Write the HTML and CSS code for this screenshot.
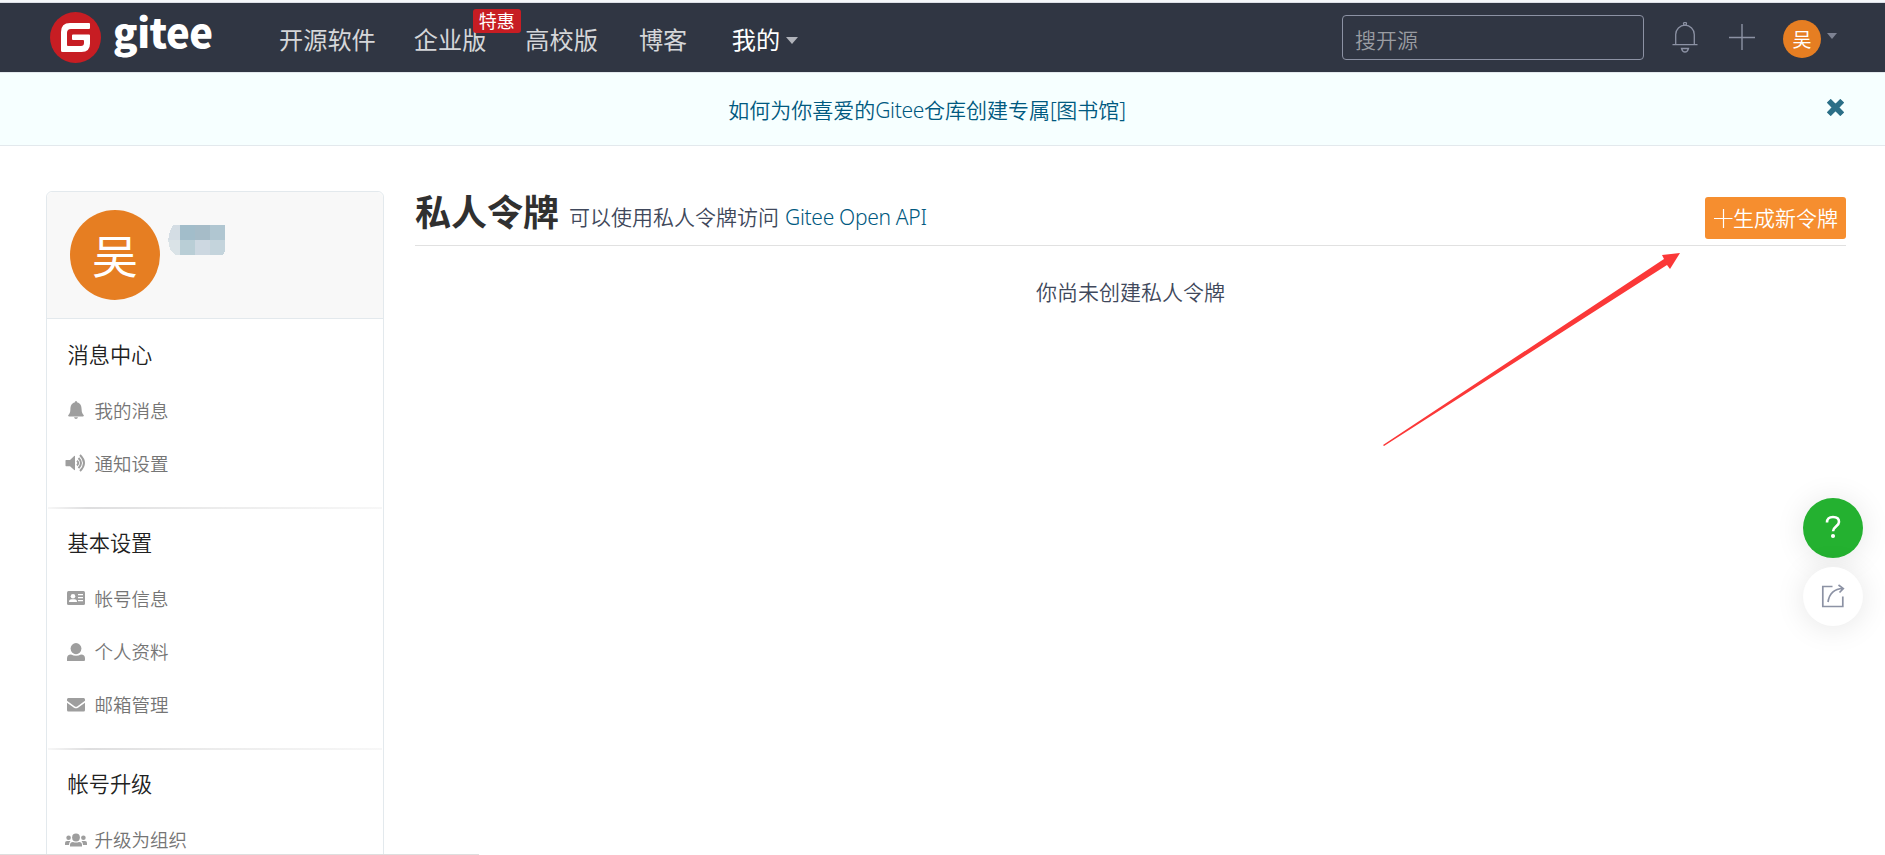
FILE: index.html
```html
<!DOCTYPE html>
<html lang="zh-CN">
<head>
  <meta charset="UTF-8" />
  <meta name="viewport" content="width=device-width, initial-scale=1" />
  <title>私人令牌 - Gitee</title>
  <link rel="stylesheet" href="styles.css">
</head>
<body>

  <header class="navbar">
    <a class="logo" href="#">
      <svg width="51" height="51" viewBox="0 0 51 51">
        <circle cx="25.5" cy="25.5" r="25.5" fill="#c71d23" />
        <path d="M39 11Q40 11 40 12V16Q40 17 39 17H21Q17 17 17 21V33Q17 34 18 34H31Q34 34 34 31V29Q34 28 33 28H23Q22 28 22 27V23.500Q22 22.500 23 22.500H39Q40 22.500 40 23.500V31.500Q40 40 31.500 40H12.500Q11 40 11 38.500V20Q11 11 20 11Z" fill="#fff" />
      </svg>
      <span class="logo-text">gitee</span>
    </a>
    <nav class="menu">
      <a class="menu-oss" href="#">开源软件</a>
      <a class="menu-ent" href="#">企业版<span class="badge">特惠</span></a>
      <a class="menu-edu" href="#">高校版</a>
      <a class="menu-blog" href="#">博客</a>
      <a class="menu-my" href="#">我的<i class="caret"></i></a>
    </nav>
    <div class="nav-right">
      <input class="search" type="text" placeholder="搜开源" />
      <svg class="bell" width="26" height="31" viewBox="0 0 26 31" fill="none" stroke="#8c92a4" stroke-width="1.300">
        <path d="M0.500 22.700H25.500M3.700 22.500V12.500a9.300 9.300 0 0 1 18.600 0V22.500M9.500 26.500H16.500Q15.500 30 13 30T9.500 26.500Z" />
        <circle cx="13" cy="1.800" r="1.500" />
      </svg>
      <svg class="plus" width="26" height="26" viewBox="0 0 26 26" stroke="#8c92a4" stroke-width="1.400">
        <path d="M0 13.500H26M13 0V26" />
      </svg>
      <span class="avatar-small">吴</span>
      <i class="caret caret-user"></i>
    </div>
  </header>

  <div class="notice">
    <a href="#">如何为你喜爱的<span class="latin">Gitee</span>仓库创建专属<span class="latin">[</span>图书馆<span class="latin">]</span></a>
    <svg class="close" width="17" height="17" viewBox="0 0 16 16">
      <path d="M3.500.5L8 5L12.500.5L15.500 3.500L11 8L15.500 12.500L12.500 15.500L8 11L3.500 15.500L.5 12.500L5 8L.5 3.500Z" fill="#2b6f87" stroke="#2b6f87" stroke-linejoin="round" />
    </svg>
  </div>

  <div class="container">
    <aside class="sidebar">
      <div class="user">
        <span class="avatar">吴</span>
        <svg class="user-name" width="57" height="30" viewBox="0 0 57 30" shape-rendering="crispEdges">
          <path d="M12 0H5L2 6L0 15H12Z" fill="#d4dde4" />
          <path d="M12 15H0L2 24L7 30H12Z" fill="#dae3e7" />
          <path d="M12 0H27V15H12Z" fill="#a2bdca" />
          <path d="M27 0H42V15H27Z" fill="#a6bcc8" />
          <path d="M42 0H57V15H42Z" fill="#b0c6d1" />
          <path d="M12 15H27V30H12Z" fill="#b9ced6" />
          <path d="M27 15H42V30H27Z" fill="#cdd8e1" />
          <path d="M42 15H57V26L55 30H42Z" fill="#c4d4dc" />
        </svg>
      </div>
      <section class="group">
        <h3>消息中心</h3>
        <a class="item" href="#">
          <svg class="icon" width="22" height="18" viewBox="0 0 22 18">
            <path d="M11 0q1.200 0 1.300 1.500C15.500 2.200 16.600 5 16.600 8.200c0 3.500 1.200 4.700 2 5.800.5.700.2 1.500-.7 1.500H4.100c-.9 0-1.200-.8-.7-1.500.8-1.100 2-2.300 2-5.800C5.400 5 6.500 2.200 9.700 1.500Q9.800 0 11 0ZM9 16.200h4Q12.500 18 11 18T9 16.200Z" />
          </svg><span>我的消息</span></a>
        <a class="item" href="#">
          <svg class="icon" width="22" height="18" viewBox="0 0 22 18">
            <path d="M1 6H5L9.200 2Q10 1.400 10 2.500V15.500Q10 16.500 9.200 16L5 12.200H1Q.5 12.200.5 11.500V6.500Q.5 6 1 6Z" />
            <path d="M12 6.700Q14.500 9 12 11.500M13.500 4Q18.500 9 13.500 14.200M15 1Q23 9 15 17" fill="none" stroke="#9e9e9e" stroke-width="1.900" />
          </svg><span>通知设置</span></a>
      </section>
      <section class="group">
        <h3>基本设置</h3>
        <a class="item" href="#">
          <svg class="icon" width="22" height="18" viewBox="0 0 22 18">
            <rect x="2" y="2" width="18" height="14" rx="1.500" />
            <g fill="#fff">
              <circle cx="8" cy="7.300" r="2.300" />
              <path d="M4 13Q4 10.200 6.500 10.200H9.500Q12 10.200 12 13ZM13 5h5v1.200h-5ZM13 8h5v1.200h-5ZM13 11h5v1.200h-5Z" />
            </g>
          </svg><span>帐号信息</span></a>
        <a class="item" href="#">
          <svg class="icon" width="22" height="18" viewBox="0 0 22 18">
            <ellipse cx="11" cy="5.600" rx="5.400" ry="5.600" />
            <path d="M2 18V15.500Q2 11.700 6 11.600Q11 14 16 11.600Q20 11.700 20 15.500V17Q20 18 19 18Z" />
          </svg><span>个人资料</span></a>
        <a class="item" href="#">
          <svg class="icon" width="22" height="18" viewBox="0 0 22 18">
            <path d="M3.300 2H18.700Q20 2 20 3.500V4.700L12.500 10.200Q11 11.200 9.500 10.200L2 4.700V3.500Q2 2 3.300 2ZM2 6.700L9 11.700Q11 13 13 11.700L20 6.700V14Q20 15.500 18.700 15.500H3.300Q2 15.500 2 14Z" />
          </svg><span>邮箱管理</span></a>
      </section>
      <section class="group">
        <h3>帐号升级</h3>
        <a class="item" href="#">
          <svg class="icon" width="22" height="18" viewBox="0 0 22 18">
            <circle cx="11" cy="6.500" r="3.900" />
            <circle cx="3.600" cy="6.700" r="2.300" />
            <circle cx="18.400" cy="6.700" r="2.300" />
            <path d="M5 15.500V14Q5 11 8 11Q11 12 14 11Q17 11 17 14V15.500ZM0 14V12Q0 10 2 10H5.500Q4 11.500 4 14ZM22 14V12Q22 10 20 10H16.500Q18 11.500 18 14Z" />
          </svg><span>升级为组织</span></a>
      </section>
    </aside>

    <main class="content">
      <div class="page-head">
        <h1>私人令牌</h1>
        <p class="desc">可以使用私人令牌访问<a class="latin" href="#">Gitee Open API</a></p>
        <button class="btn-new">
          <svg width="19" height="19" viewBox="0 0 19 19" stroke="#fff" stroke-width="1.200">
            <path d="M0 9.500H18.500M9.500 0V19" />
          </svg><span>生成新令牌</span>
        </button>
      </div>
      <p class="empty">你尚未创建私人令牌</p>
    </main>
  </div>

  <svg class="pointer" width="297" height="194" viewBox="0 0 297 194">
    <path d="M297 0L279 2L281 6L0 192L1 193L284 12L287 16Z" fill="#fb3838" />
  </svg>

  <div class="float-tools">
    <a class="tool help" href="#">
      <svg width="16" height="24" viewBox="0 0 16 24" fill="none" stroke="#fff" stroke-width="2.600">
        <path d="M2 7.500Q2 2 8 2T14 7Q14 9 11 11.500T8 16.200" />
        <circle cx="8" cy="21" r="1.300" fill="#fff" stroke-width="1.500" />
      </svg>
    </a>
    <a class="tool share" href="#">
      <svg width="24" height="24" viewBox="0 0 24 24" fill="none" stroke="#8c92a4" stroke-width="1.700">
        <path d="M11.500 2.500H1.800V22.500H21.800V12.500M7 18Q9 5 22 4.500M17.500 1L22.300 4.500L18.500 8.500" />
      </svg>
    </a>
  </div>

  <div class="status-line"></div>

</body>
</html>
```

FILE: styles.css
```css
* {
  box-sizing: border-box;
}
body {
  margin: 0;
  height: 855px;
  overflow: hidden;
  position: relative;
  background: #fff;
  color: #40485b;
  font-family: "Noto Sans CJK SC", sans-serif;
  font-size: 21px;
  font-weight: 350;
  border-top: 2px solid #f5f7fa;
}
a {
  color: #005980;
  text-decoration: none;
}
h1, h3, p {
  margin: 0;
}
.latin {
  font-family: "Noto Sans", "Open Sans", sans-serif;
  letter-spacing: -0.35px;
}

/* top bar */
.navbar {
  display: flex;
  height: 71px;
  background: #303643;
  border-top: 1px solid #dcdfe6;
  border-bottom: 1px solid #e3e9ed;
}
.logo {
  display: flex;
  width: 229px;
  margin-left: 50px;
  padding-top: 9px;
}
.logo-text {
  margin: -11px 0 0 12px;
  color: #fff;
  font-size: 40px;
  font-weight: 900;
  line-height: 60px;
  letter-spacing: -0.5px;
}
.menu {
  display: flex;
  font-size: 24.2px;
  font-weight: 400;
  line-height: 71px;
}
.menu a {
  position: relative;
  color: #d5d6d9;
  white-space: nowrap;
}
.menu-oss {
  margin-right: 38px;
}
.menu-ent {
  margin-right: 39px;
}
.menu-edu {
  margin-right: 41px;
}
.menu-blog {
  margin-right: 44.5px;
}
.menu .menu-my {
  color: #fff;
}
.badge {
  position: absolute;
  top: 6px;
  left: 59px;
  width: 48px;
  height: 24px;
  border-radius: 3px;
  background: #c71d23;
  color: #fff;
  font-size: 18px;
  line-height: 23px;
  text-align: center;
}
.caret {
  display: inline-block;
  margin-left: 6px;
  border: 6.5px solid transparent;
  border-top: 7px solid #b0b3ba;
  border-bottom: 0;
  vertical-align: 5px;
}
.nav-right {
  display: flex;
  margin-left: auto;
  margin-right: 48px;
}
.search {
  width: 302px;
  height: 45px;
  margin-top: 12px;
  padding: 3px 12px 0;
  border: 1px solid #8c92a4;
  border-radius: 4px;
  background: transparent;
  font: inherit;
}
.search::placeholder {
  color: #9a9ca2;
}
.bell {
  margin: 19px 0 0 28px;
}
.plus {
  margin: 21px 0 0 31px;
}
.avatar-small {
  width: 38px;
  height: 38px;
  margin: 17px 0 0 28px;
  border-radius: 50%;
  background: #e67e22;
  color: #fff;
  font-size: 19px;
  font-weight: 400;
  line-height: 38px;
  text-align: center;
}
.caret-user {
  height: 6px;
  margin: 30px 0 0 6px;
  border-width: 6px 5.5px 0;
  border-top-color: #7d8292;
}

/* notice bar */
.notice {
  position: relative;
  height: 73px;
  padding-right: 31px;
  background: #f6ffff;
  border-bottom: 1px solid #e3e9ed;
  line-height: 73px;
  text-align: center;
}
.close {
  position: absolute;
  top: 26px;
  right: 41px;
}

.container {
  display: flex;
  gap: 31px;
  padding: 45px 39px 0 46px;
}

/* settings menu */
.sidebar {
  width: 338px;
  height: 700px;
  flex: none;
  border: 1px solid #e3e9ed;
  border-radius: 6px;
}
.user {
  display: flex;
  height: 127px;
  margin-bottom: 2px;
  padding: 18px 0 0 23px;
  border-bottom: 1px solid #e3e9ed;
  border-radius: 6px 6px 0 0;
  background: #f8f8f8;
}
.avatar {
  width: 90px;
  height: 90px;
  border-radius: 50%;
  background: #e67e22;
  color: #fff;
  font-size: 46px;
  font-weight: 400;
  line-height: 86px;
  text-align: center;
}
.user-name {
  margin: 15px 0 0 8px;
}
.group {
  padding-bottom: 16px;
}
.group + .group::before {
  content: "";
  display: block;
  height: 2px;
  margin: 0 1px;
  background: linear-gradient(to right, #f7f7f7, #dededf 12%, #ececec 50%, #f7f7f7);
}
.group h3 {
  height: 63.5px;
  padding-left: 20.5px;
  color: #212121;
  font-size: 21.2px;
  font-weight: 350;
  line-height: 65px;
}
.item {
  display: flex;
  align-items: center;
  height: 53.3px;
  padding-left: 18px;
  color: #757575;
  font-size: 18.5px;
  line-height: 49px;
}
.item span {
  padding-bottom: 2px;
}
.icon {
  margin: -2px 7.5px 0 0;
  fill: #9e9e9e;
}

/* tokens */
.content {
  flex: 1;
}
.page-head {
  display: flex;
  height: 55px;
  border-bottom: 1px solid #e1e1e1;
}
.page-head h1 {
  color: #303030;
  font-size: 36px;
  font-weight: 700;
  line-height: 38px;
}
.desc {
  margin-left: 10px;
  line-height: 50px;
}
.desc a {
  margin-left: 6px;
  letter-spacing: -0.3px;
}
.btn-new {
  display: flex;
  align-items: center;
  width: 141px;
  height: 42px;
  margin: 6px 0 0 auto;
  padding: 0 0 0 9px;
  border: none;
  border-radius: 3px;
  background: #f68e2f;
  color: #fff;
  font: inherit;
  white-space: nowrap;
}
.btn-new span {
  padding-bottom: 2px;
}
.empty {
  margin-top: 20px;
  line-height: 50px;
  text-align: center;
}

.pointer {
  position: absolute;
  top: 251px;
  left: 1383px;
}
.float-tools {
  position: absolute;
  top: 496px;
  right: 22px;
  display: flex;
  flex-direction: column;
  gap: 9px;
}
.tool {
  display: flex;
  align-items: center;
  justify-content: center;
  width: 60px;
  height: 60px;
  border-radius: 50%;
  box-shadow: 0 2px 30px rgba(0, 0, 0, 0.1);
}
.help {
  padding-bottom: 2px;
  background: #24b130;
}
.share {
  position: relative;
  height: 59px;
  padding-bottom: 2px;
  background: #fff;
}
.status-line {
  position: absolute;
  bottom: 0;
  left: 0;
  width: 479px;
  height: 1px;
  background: #dedede;
}
```
